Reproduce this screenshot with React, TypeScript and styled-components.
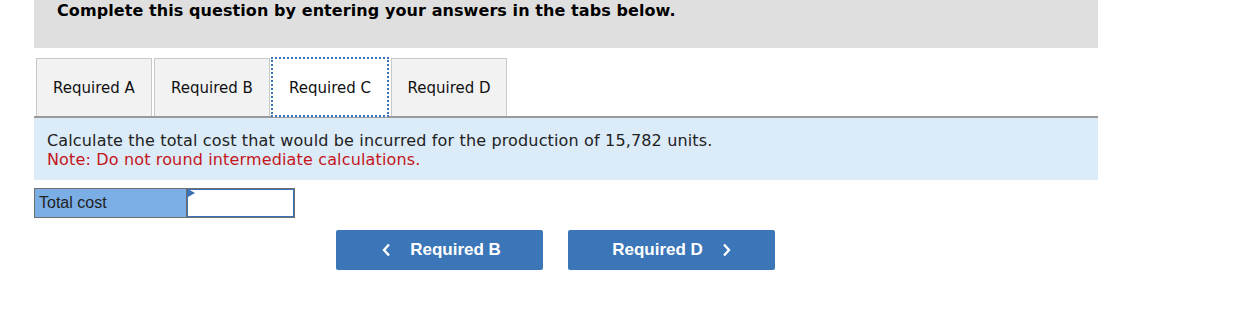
import React from "react";
import styled, { createGlobalStyle } from "styled-components";

const Global = createGlobalStyle`
  html, body { margin: 0; padding: 0; background: #fff; }
  body { font-family: "DejaVu Sans", Verdana, sans-serif; }
`;

const Page = styled.div`
  width: 1064px;
  margin-left: 34px;
`;

const Header = styled.div`
  background: #dfdfdf;
  height: 48px;
  padding: 1px 0 0 23px;
  box-sizing: border-box;
  font-weight: bold;
  font-size: 16px;
  letter-spacing: 0.08px;
  color: #000;
  line-height: 20px;
`;

const TabBar = styled.div`
  display: flex;
  gap: 2px;
  margin-top: 10px;
  padding-left: 2px;
  border-bottom: 2px solid #9a9a9a;
  height: 58px;
`;

const Tab = styled.div<{ $active?: boolean }>`
  width: ${(p) => (p.$active ? "118px" : "116px")};
  box-sizing: border-box;
  height: ${(p) => (p.$active ? "60px" : "58px")};
  display: flex;
  align-items: center;
  justify-content: center;
  font-size: 15px;
  color: #111;
  background: ${(p) => (p.$active ? "#fff" : "#f2f2f2")};
  border: ${(p) => (p.$active ? "2px dotted #3a72b5" : "1px solid #c8c8c8")};
  border-bottom: ${(p) => (p.$active ? "2px dotted #3a72b5" : "none")};
  margin-top: ${(p) => (p.$active ? "-1px" : "0")};
  margin-left: ${(p) => (p.$active ? "-1px" : "0")};
  padding-top: ${(p) => (p.$active ? "2px" : "1px")};
  position: relative;
  z-index: ${(p) => (p.$active ? 1 : 0)};
`;

const Prompt = styled.div`
  background: #dbebf8;
  height: 62px;
  box-sizing: border-box;
  padding: 13px 0 0 13px;
  font-size: 16px;
  letter-spacing: 0.15px;
  line-height: 19px;
  color: #222;
`;

const Note = styled.div`
  color: #c4161c;
`;

const Row = styled.div`
  display: flex;
  margin-top: 8px;
  width: 261px;
  height: 30px;
  border: 1px solid #6f6f6f;
  box-sizing: border-box;
`;

const Label = styled.div`
  width: 152px;
  background: #7aaee5;
  border-right: 1px solid #6f6f6f;
  font-family: "Liberation Sans", Arial, sans-serif;
  font-size: 16px;
  color: #222;
  padding: 5px 0 0 4px;
  box-sizing: border-box;
`;

const InputCell = styled.div`
  flex: 1;
  position: relative;
  background: #fff;
  border: 1px solid #3a72b5;
`;

const Marker = styled.span`
  position: absolute;
  left: 0;
  top: -1px;
  width: 0;
  height: 0;
  border-top: 4px solid transparent;
  border-bottom: 4px solid transparent;
  border-left: 7px solid #3a72b5;
`;

const Nav = styled.div`
  display: flex;
  gap: 25px;
  margin-top: 12px;
  padding-left: 302px;
`;

const NavButton = styled.button<{ $shift: number }>`
  width: 207px;
  height: 40px;
  background: #3a76b8;
  color: #fff;
  border: none;
  border-radius: 2px;
  font-family: "Liberation Sans", Arial, sans-serif;
  font-weight: bold;
  font-size: 17px;
  display: flex;
  align-items: center;
  justify-content: center;
  gap: 19px;
  padding: 0 0 0 ${(p) => p.$shift}px;
`;

const Chevron = ({ dir }: { dir: "left" | "right" }) => (
  <svg width="9" height="14" viewBox="0 0 9 14">
    <path
      d={dir === "left" ? "M7 1.5 L2 7 L7 12.5" : "M2 1.5 L7 7 L2 12.5"}
      stroke="#fff"
      strokeWidth="2.4"
      fill="none"
    />
  </svg>
);

export default function App() {
  return (
    <>
      <Global />
      <Page>
        <Header>Complete this question by entering your answers in the tabs below.</Header>
        <TabBar>
          <Tab>Required A</Tab>
          <Tab>Required B</Tab>
          <Tab $active>Required C</Tab>
          <Tab>Required D</Tab>
        </TabBar>
        <Prompt>
          <div>Calculate the total cost that would be incurred for the production of 15,782 units.</div>
          <Note>Note: Do not round intermediate calculations.</Note>
        </Prompt>
        <Row>
          <Label>Total cost</Label>
          <InputCell>
            <Marker />
          </InputCell>
        </Row>
        <Nav>
          <NavButton $shift={4}>
            <Chevron dir="left" />
            Required B
          </NavButton>
          <NavButton $shift={0}>
            Required D
            <Chevron dir="right" />
          </NavButton>
        </Nav>
      </Page>
    </>
  );
}
